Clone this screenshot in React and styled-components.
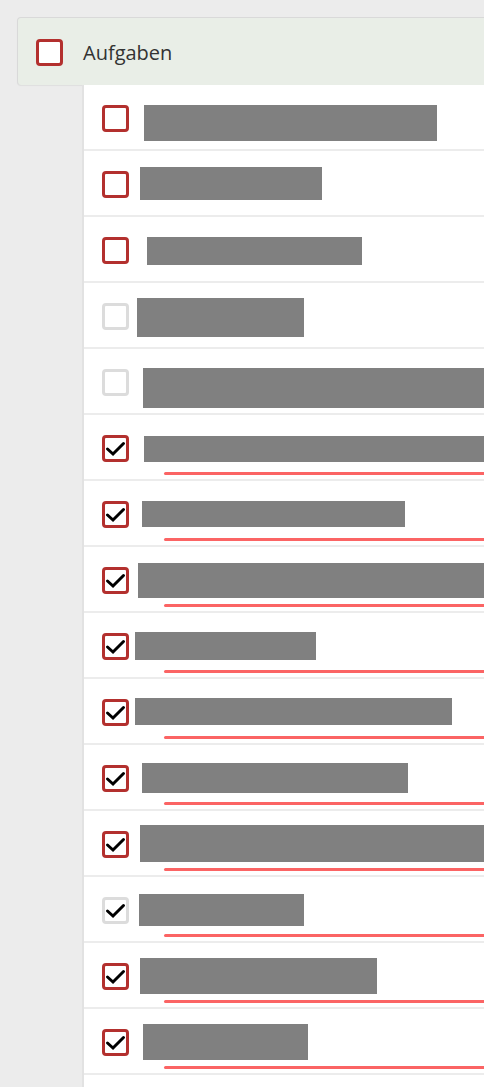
import React from "react";
import styled, { createGlobalStyle } from "styled-components";

const GlobalStyle = createGlobalStyle`
  html, body {
    margin: 0;
    padding: 0;
    background: #ececec;
    font-family: "Open Sans", "Noto Sans", sans-serif;
    overflow: hidden;
  }
`;

const Page = styled.div`
  padding: 17px 0 0 17px;
  width: calc(100% + 40px);
  box-sizing: border-box;
`;

const Header = styled.div`
  display: flex;
  align-items: center;
  height: 68px;
  padding: 1px 0 0 18px;
  box-sizing: border-box;
  background: #e9eee7;
  border: 1px solid #d9d9d9;
  border-bottom: none;
  border-radius: 4px 0 0 4px;
  box-shadow: 0 1px 1px rgba(0, 0, 0, 0.06);
`;

const Title = styled.span`
  margin-left: 20px;
  font-size: 20px;
  color: #333;
`;

const List = styled.div`
  margin-left: 65px;
  background: #fff;
  border-left: 2px solid #e2e2e2;
`;

const Row = styled.div`
  display: flex;
  flex-direction: column;
  height: 64px;
  border-bottom: 2px solid #ececec;
`;

const Main = styled.div`
  display: flex;
  align-items: flex-start;
  height: 57px;
  flex-shrink: 0;
  padding-left: 18px;
`;

const Box = styled.span`
  display: flex;
  align-items: center;
  justify-content: center;
  flex-shrink: 0;
  width: 27px;
  height: 27px;
  box-sizing: border-box;
  margin-top: ${(p) => (p.$big ? 0 : 20)}px;
  border: 3px solid ${(p) => (p.$muted ? "#dcdcdc" : "#b3302e")};
  border-radius: 4px;
  background: #fff;
`;

const Bar = styled.span`
  display: block;
  background: #808080;
  flex: ${(p) => (p.$width ? "none" : 1)};
  width: ${(p) => (p.$width ? `${p.$width}px` : "auto")};
  height: ${(p) => p.$h}px;
  margin-top: ${(p) => p.$top}px;
  margin-left: ${(p) => p.$gap}px;
`;

const Underline = styled.span`
  display: block;
  height: 3px;
  margin-left: 80px;
  background: #fb6464;
  border-radius: 2px 0 0 2px;
`;

const Check = ({ checked, muted, big }) => (
  <Box $muted={muted} $big={big}>
    {checked && (
      <svg width="21" height="21" viewBox="0 0 21 21">
        <path
          d="M2.5 11 L8 16 L18.5 5.5"
          fill="none"
          stroke="#000"
          strokeWidth="3"
          strokeLinecap="round"
          strokeLinejoin="miter"
        />
      </svg>
    )}
  </Box>
);

const items = [
  { x: 144, w: 293, top: 20, h: 36 },
  { x: 140, w: 182, top: 16, h: 33 },
  { x: 147, w: 215, top: 20, h: 28 },
  { x: 137, w: 167, top: 15, h: 39, muted: true },
  { x: 143, top: 19, h: 40, muted: true },
  { x: 144, top: 21, h: 26, done: true },
  { x: 142, w: 263, top: 20, h: 26, done: true },
  { x: 138, top: 16, h: 35, done: true },
  { x: 135, w: 181, top: 19, h: 28, done: true },
  { x: 135, w: 317, top: 19, h: 27, done: true },
  { x: 142, w: 266, top: 18, h: 30, done: true },
  { x: 140, top: 14, h: 37, done: true },
  { x: 139, w: 165, top: 17, h: 32, done: true, muted: true },
  { x: 140, w: 237, top: 15, h: 36, done: true },
  { x: 143, w: 165, top: 15, h: 36, done: true },
  { x: 141, w: 200, top: 18, h: 32, done: true },
];

export default function App() {
  return (
    <Page>
      <GlobalStyle />
      <Header>
        <Check big />
        <Title>Aufgaben</Title>
      </Header>
      <List>
        {items.map((it, i) => (
          <Row key={i}>
            <Main>
              <Check checked={it.done} muted={it.muted} />
              <Bar $width={it.w} $h={it.h} $top={it.top} $gap={it.x - 129} />
            </Main>
            {it.done && <Underline />}
          </Row>
        ))}
      </List>
    </Page>
  );
}
